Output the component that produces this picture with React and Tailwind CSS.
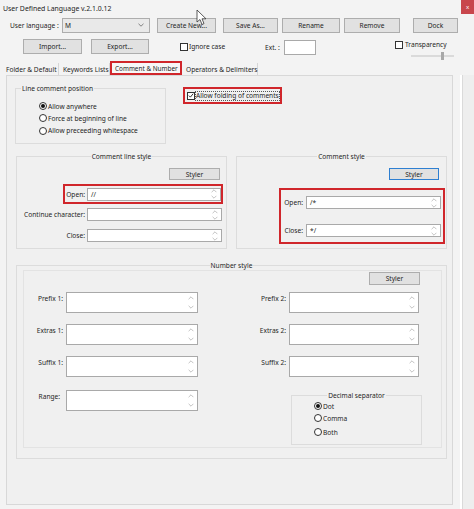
// User Defined Language dialog — "Comment & Number" tab.

function Button({ className = '', children }) {
  return (
    <div className={`flex items-center justify-center bg-[#e1e1e1] border border-[#adadad] ${className}`}>
      {children}
    </div>
  )
}

function Arrow({ down }) {
  return (
    <svg width="6" height="4" viewBox="0 0 6 4">
      <path
        d={down ? 'M0.6 0.8 L3 3.2 L5.4 0.8' : 'M0.6 3.2 L3 0.8 L5.4 3.2'}
        fill="none"
        stroke="#b4b4b4"
        strokeWidth="0.8"
      />
    </svg>
  )
}

// text box with the small up / down arrows at the right
function Field({ value, tall, className = '' }) {
  return (
    <div className={`flex bg-white border border-[#a9a9a9] ${className}`}>
      <div className={`flex-1 pl-[3px] ${tall ? 'pt-[2px]' : 'flex items-center'}`}>{value}</div>
      <div className={`flex flex-col items-center justify-between w-[12px] ${tall ? 'py-[3px]' : 'py-[0.5px]'}`}>
        <Arrow />
        <Arrow down />
      </div>
    </div>
  )
}

function Check({ checked }) {
  return (
    <span className="flex shrink-0 items-center justify-center w-[8px] h-[8px] bg-white border border-[#333]">
      {checked && (
        <svg width="7" height="7" viewBox="0 0 7 7">
          <path d="M1 3.6 L2.8 5.4 L6 1.4" fill="none" stroke="#111" strokeWidth="1" />
        </svg>
      )}
    </span>
  )
}

function Radio({ checked }) {
  return (
    <span className="flex shrink-0 items-center justify-center w-[8px] h-[8px] rounded-full bg-white border border-[#333]">
      {checked && <span className="w-[4px] h-[4px] rounded-full bg-[#111]" />}
    </span>
  )
}

function GroupTitle({ children, center }) {
  return (
    <div className={`-mt-[5px] h-[9px] px-[1px] bg-[#f0f0f0] w-fit ${center ? 'self-center' : 'ml-[5px]'}`}>
      {children}
    </div>
  )
}

const TABS = [
  { label: 'Folder & Default', w: 'w-[55px] ml-[4px] pl-[2px]' },
  { label: 'Keywords Lists', w: 'w-[51px] pl-[4px]' },
  { label: 'Comment & Number', w: 'w-[72px] pl-[3px] text-[6.4px]', active: true },
  { label: 'Operators & Delimiters', w: 'w-[76px] pl-[4px]' },
]

export default function App() {
  return (
    <div className="relative flex w-[474px] h-[509px] overflow-hidden whitespace-nowrap bg-[#f3f3f3] text-[6.6px] leading-[9px] text-[#1e1e1e] font-['Noto_Sans',sans-serif]">
      <div className="flex flex-col w-[460px]">
        {/* title */}
        <div className="h-[17px] pl-[3px] pt-[4px] text-[6.9px]">User Defined Language v.2.1.0.12</div>

        {/* language row */}
        <div className="flex items-center h-[16px]">
          <span className="ml-[10px] w-[52px]">User language :</span>
          <div className="flex items-center justify-between w-[88px] h-[15px] pl-[2px] pr-[5px] bg-[#e9e9e9] border border-[#adadad]">
            <span>M</span>
            <svg width="6" height="4" viewBox="0 0 6 4">
              <path d="M0.5 0.8 L3 3.2 L5.5 0.8" fill="none" stroke="#666" strokeWidth="0.8" />
            </svg>
          </div>
          <Button className="ml-[7px] w-[59px] h-[15px]">Create New...</Button>
          <Button className="ml-[7px] w-[55px] h-[15px]">Save As...</Button>
          <Button className="ml-[4px] w-[58px] h-[15px]">Rename</Button>
          <Button className="ml-[4px] w-[56px] h-[15px]">Remove</Button>
          <Button className="ml-[13px] w-[45px] h-[15px]">Dock</Button>
        </div>

        {/* import / export row */}
        <div className="flex items-start h-[22px] mt-[6px]">
          <Button className="ml-[23px] w-[59px] h-[15px]">Import...</Button>
          <Button className="ml-[9px] w-[58px] h-[15px]">Export...</Button>
          <div className="flex items-center gap-[1px] ml-[31px] w-[85px] mt-[3px]">
            <Check />
            <span>Ignore case</span>
          </div>
          <span className="w-[19px] mt-[4px]">Ext. :</span>
          <div className="w-[32px] h-[15px] mt-[1px] bg-white border border-[#a9a9a9]" />
          <div className="flex flex-col ml-[79px] mt-[1px]">
            <div className="flex items-center gap-[2px]">
              <Check />
              <span>Transparency</span>
            </div>
            <div className="relative ml-[16px] mt-[6px] w-[43px] h-[2px] bg-[#dadada]">
              <div className="absolute left-[30px] -top-[3px] w-[3px] h-[8px] bg-[#a8a8a8]" />
            </div>
          </div>
        </div>

        {/* tabs */}
        <div className="flex items-end h-[14px]">
          {TABS.map((t) =>
            t.active ? (
              <div key={t.label} className={`flex items-center h-[14px] border-2 border-[#d0262b] bg-[#f7f7f7] ${t.w}`}>
                {t.label}
              </div>
            ) : (
              <div key={t.label} className={`flex items-center h-[12px] border-r border-[#d6d6d6] ${t.w}`}>
                {t.label}
              </div>
            )
          )}
        </div>

        {/* tab page */}
        <div className="flex flex-col ml-[6px] w-[447px] h-[430px] bg-[#f0f0f0] border border-[#d8d8d8]">
          <div className="flex items-start">
            <div className="flex flex-col ml-[8px] mt-[12px] w-[151px] h-[56px] border border-[#dcdcdc]">
              <GroupTitle>Line comment position</GroupTitle>
              <div className="flex items-center gap-[1px] ml-[23px] mt-[7px] h-[12px]">
                <Radio checked />
                <span>Allow anywhere</span>
              </div>
              <div className="flex items-center gap-[1px] ml-[23px] h-[12px]">
                <Radio />
                <span>Force at beginning of line</span>
              </div>
              <div className="flex items-center gap-[1px] ml-[23px] h-[13px]">
                <Radio />
                <span>Allow preceeding whitespace</span>
              </div>
            </div>
            <div className="flex items-center ml-[17px] mt-[11px] w-[99px] h-[17px] pl-[2px] border-2 border-[#d0262b]">
              <Check checked />
              <span className="border border-dotted border-[#555] leading-[8px]">Allow folding of comments</span>
            </div>
          </div>

          {/* comment styles */}
          <div className="flex mt-[12px]">
            <div className="flex flex-col ml-[9px] w-[211px] h-[93px] border border-[#dcdcdc]">
              <GroupTitle center>Comment line style</GroupTitle>
              <Button className="self-end mr-[6px] mt-[7px] w-[51px] h-[12px]">Styler</Button>
              <div className="flex items-center ml-[46px] mt-[4px] w-[160px] h-[20px] border-2 border-[#d0262b]">
                <span className="w-[20px] text-right">Open:</span>
                <Field value="//" className="ml-[2px] w-[134px] h-[13px]" />
              </div>
              <div className="flex items-center mt-[4px] h-[13px]">
                <span className="w-[68px] text-right">Continue character:</span>
                <Field className="ml-[2px] w-[135px] h-[13px]" />
              </div>
              <div className="flex items-center mt-[8px] h-[13px]">
                <span className="w-[68px] text-right">Close:</span>
                <Field className="ml-[2px] w-[135px] h-[13px]" />
              </div>
            </div>

            <div className="flex flex-col ml-[9px] w-[211px] h-[93px] border border-[#dcdcdc]">
              <GroupTitle center>Comment style</GroupTitle>
              <Button className="self-end mr-[7px] mt-[7px] w-[50px] h-[12px] !border-[#2e7fd1]">Styler</Button>
              <div className="flex flex-col ml-[42px] mt-[8px] w-[166px] h-[56px] border-2 border-[#d0262b]">
                <div className="flex items-center mt-[6px] h-[13px]">
                  <span className="w-[22px] text-right">Open:</span>
                  <Field value="/*" className="ml-[3px] w-[135px] h-[13px]" />
                </div>
                <div className="flex items-center mt-[15px] h-[13px]">
                  <span className="w-[22px] text-right">Close:</span>
                  <Field value="*/" className="ml-[3px] w-[135px] h-[13px]" />
                </div>
              </div>
            </div>
          </div>

          {/* number style */}
          <div className="flex flex-col ml-[9px] mt-[16px] w-[431px] h-[194px] border border-[#dcdcdc]">
            <GroupTitle center>Number style</GroupTitle>
            <div className="flex flex-col ml-[6px] w-[419px] h-[178px] border border-[#e3e3e3]">
              <Button className="self-end mr-[21px] mt-[1px] w-[51px] h-[13px]">Styler</Button>
              <div className="flex mt-[7px]">
                <div className="flex flex-col w-[174px]">
                  {['Prefix 1:', 'Extras 1:', 'Suffix 1:'].map((l, i) => (
                    <div key={l} className={`flex items-start ${i ? 'mt-[11px]' : ''}`}>
                      <span className="w-[39px] text-right mt-[2px]">{l}</span>
                      <Field tall className="ml-[3px] w-[132px] h-[21px]" />
                    </div>
                  ))}
                  <div className="flex items-start mt-[13px]">
                    <span className="w-[36px] text-right mt-[2px]">Range:</span>
                    <Field tall className="ml-[6px] w-[132px] h-[21px]" />
                  </div>
                </div>
                <div className="flex flex-col ml-[48px]">
                  {['Prefix 2:', 'Extras 2:', 'Suffix 2:'].map((l, i) => (
                    <div key={l} className={`flex items-start ${i ? 'mt-[11px]' : ''}`}>
                      <span className="w-[40px] text-right mt-[2px]">{l}</span>
                      <Field tall className="ml-[3px] w-[130px] h-[21px]" />
                    </div>
                  ))}
                  <div className="flex flex-col ml-[45px] mt-[18px] w-[131px] h-[50px] border border-[#dcdcdc]">
                    <GroupTitle center>Decimal separator</GroupTitle>
                    <div className="flex items-center gap-[1px] ml-[22px] h-[12px]">
                      <Radio checked />
                      <span>Dot</span>
                    </div>
                    <div className="flex items-center gap-[1px] ml-[22px] h-[12px]">
                      <Radio />
                      <span>Comma</span>
                    </div>
                    <div className="flex items-center gap-[1px] ml-[22px] mt-[2px] h-[12px]">
                      <Radio />
                      <span>Both</span>
                    </div>
                  </div>
                </div>
              </div>
            </div>
          </div>
        </div>
      </div>

      {/* right edge of the window */}
      <div className="flex flex-col w-[14px]">
        <div className="flex items-center justify-center ml-[1px] w-[13px] h-[14px] bg-[#c8464c] text-white text-[6px]">x</div>
        <div className="flex flex-1 mt-[61px]">
          <div className="w-[2px] bg-white" />
          <div className="flex-1 bg-[#eeeeee] border-l border-[#dadada]" />
        </div>
      </div>

      {/* mouse pointer over the title bar */}
      <svg className="absolute left-[196px] top-[9px]" width="11" height="17" viewBox="0 0 11 17">
        <path d="M1 1 L1 13 L4 10.5 L6 15.5 L8 14.6 L6 9.8 L10 9.8 Z" fill="white" stroke="#333" strokeWidth="0.8" />
      </svg>
    </div>
  )
}
